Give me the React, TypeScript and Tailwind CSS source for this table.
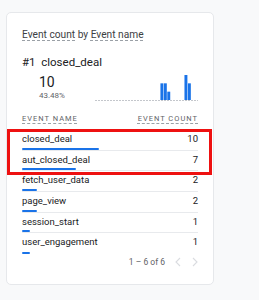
const rows = [
  { name: 'closed_deal', count: 10 },
  { name: 'aut_closed_deal', count: 7 },
  { name: 'fetch_user_data', count: 2 },
  { name: 'page_view', count: 2 },
  { name: 'session_start', count: 1 },
  { name: 'user_engagement', count: 1 },
];

const bars: Record<number, number> = { 19: 2, 20: 2, 21: 1, 26: 3, 27: 2 };

function MiniChart() {
  const slot = 103 / 30;
  return (
    <svg width="103" height="27" viewBox="0 0 103 27" className="block">
      <line x1="0" y1="26.5" x2="103" y2="26.5" stroke="#c4c7cc" strokeWidth="1" strokeDasharray="2 1" />
      {Object.entries(bars).map(([i, v]) => {
        const h = (v / 3) * 25;
        return <rect key={i} x={Number(i) * slot + 0.2} y={26 - h} width={slot - 0.5} height={h} fill="#1a73e8" />;
      })}
    </svg>
  );
}

function Chevron({ dir }: { dir: 'left' | 'right' }) {
  return (
    <svg width="6" height="10" viewBox="0 0 6 10" className="block">
      <polyline
        points={dir === 'left' ? '5,1 1,5 5,9' : '1,1 5,5 1,9'}
        fill="none"
        stroke="#dadce0"
        strokeWidth="1.1"
      />
    </svg>
  );
}

export default function App() {
  const max = 10;
  return (
    <div className="w-[259px] h-[300px] bg-[#f8f9fa] pt-[12px] pl-[6px] font-['Roboto',sans-serif] text-[#202124]">
      <div className="relative w-[208px] h-[273px] bg-white border border-[#e6e8eb] rounded-[5px] px-[15px] pt-[16px]">
        <div className="text-[10.2px] leading-[12px] text-[#3c4043]">
          <span className="underline decoration-dashed decoration-[#9aa0a6] underline-offset-[2px]">Event count</span>
          {' by '}
          <span className="underline decoration-dashed decoration-[#9aa0a6] underline-offset-[2px]">Event name</span>
        </div>

        <div className="mt-[14px] text-[11.5px] leading-[14px]">#1&nbsp; closed_deal</div>

        <div className="mt-[5px] flex items-end">
          <div className="w-[73px] pl-[17px]">
            <div className="text-[14px] leading-[16px]">10</div>
            <div className="mt-[1px] text-[8px] leading-[10px] text-[#5f6368]">43.48%</div>
          </div>
          <MiniChart />
        </div>

        <div className="mt-[13px] h-[16px] border-b border-[#e8eaed] flex justify-between text-[7.5px] leading-[9px] tracking-[1px] text-[#5f6368]">
          <span className="self-start underline decoration-dashed decoration-[#9aa0a6] underline-offset-[2px]">EVENT NAME</span>
          <span className="self-start underline decoration-dashed decoration-[#9aa0a6] underline-offset-[2px]">EVENT COUNT</span>
        </div>

        {rows.map((r, i) => (
          <div
            key={r.name}
            className={`h-[20.67px] flex flex-col ${i < rows.length - 1 ? 'border-b border-[#e8eaed]' : ''}`}
          >
            <div className="mt-[3px] flex justify-between text-[9.5px] leading-[12px]">
              <span>{r.name}</span>
              <span>{r.count}</span>
            </div>
            <div className="mt-auto h-[2px] bg-[#1a73e8] rounded-[1px]" style={{ width: `${(r.count / max) * 77}px` }} />
          </div>
        ))}

        <div className="mt-[3px] flex items-center justify-end text-[8.5px] leading-[10px] text-[#5f6368]">
          <span>1 – 6 of 6</span>
          <div className="ml-[10px] flex items-center gap-[11px]">
            <Chevron dir="left" />
            <Chevron dir="right" />
          </div>
        </div>

        <div className="absolute left-0 top-[116px] w-[205px] h-[46px] border-[3px] border-[#ee1111]" />
      </div>
    </div>
  );
}
